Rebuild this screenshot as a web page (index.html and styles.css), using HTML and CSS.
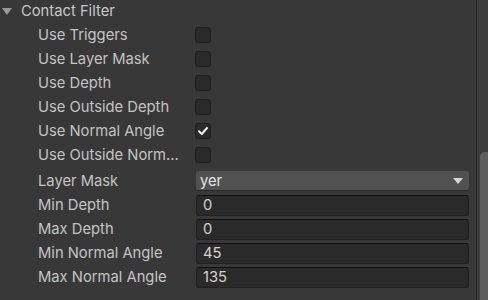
FILE: index.html
```html
<!DOCTYPE html>
<html>
<head>
<meta charset="utf-8">
<link rel="stylesheet" href="styles.css">
</head>
<body>
<div class="window">
  <div class="panel">
    <div class="foldout">
      <span class="arrow"></span>
      <span class="title">Contact Filter</span>
    </div>
    <div class="rows">
      <div class="row"><span class="label">Use Triggers</span><span class="check"></span></div>
      <div class="row"><span class="label">Use Layer Mask</span><span class="check"></span></div>
      <div class="row"><span class="label">Use Depth</span><span class="check"></span></div>
      <div class="row"><span class="label">Use Outside Depth</span><span class="check"></span></div>
      <div class="row"><span class="label">Use Normal Angle</span><span class="check checked"><svg viewBox="0 0 16 16" width="16" height="16"><path d="M4 8.3 L6.8 11 L12 5" fill="none" stroke="#f0f0f0" stroke-width="2" stroke-linecap="round" stroke-linejoin="round"/></svg></span></div>
      <div class="row"><span class="label">Use Outside Norm...</span><span class="check"></span></div>
    </div>
    <div class="rows values">
      <div class="row"><span class="label">Layer Mask</span><span class="dropdown"><span class="val">yer</span><span class="tri"></span></span></div>
      <div class="row"><span class="label">Min Depth</span><span class="field">0</span></div>
      <div class="row"><span class="label">Max Depth</span><span class="field">0</span></div>
      <div class="row"><span class="label">Min Normal Angle</span><span class="field">45</span></div>
      <div class="row"><span class="label">Max Normal Angle</span><span class="field">135</span></div>
    </div>
  </div>
  <div class="scrollbar"><div class="thumb"></div></div>
</div>
</body>
</html>
```
FILE: styles.css
```css
html, body {
  margin: 0;
  padding: 0;
  background: #383838;
}
body {
  font-family: Inter, "Noto Sans", sans-serif;
  font-size: 14.75px;
  color: #c4c4c4;
  width: 488px;
  height: 300px;
  overflow: hidden;
}
.window {
  display: flex;
  height: 300px;
}
.panel {
  flex: 1;
  padding-right: 7px;
  border-right: 1px solid #262626;
}
.foldout {
  display: flex;
  align-items: center;
  height: 22px;
}
.arrow {
  width: 0;
  height: 0;
  margin-left: 2px;
  margin-right: 9px;
  border-left: 5px solid transparent;
  border-right: 5px solid transparent;
  border-top: 7px solid #999999;
}
.title {
  color: #c8c8c8;
}
.rows {
  display: flex;
  flex-direction: column;
  margin-top: 1px;
}
.rows.values {
  margin-top: 2px;
}
.row {
  display: flex;
  align-items: center;
  height: 24px;
}
.label {
  width: 157px;
  padding-left: 38px;
  white-space: nowrap;
}
.check {
  width: 16px;
  height: 16px;
  box-sizing: border-box;
  border: 1px solid #1e1e1e;
  border-radius: 3px;
  background: #2b2b2b;
  display: flex;
  align-items: center;
  justify-content: center;
}
.check svg {
  display: block;
  flex: none;
}
.dropdown {
  flex: 1;
  height: 20px;
  box-sizing: border-box;
  margin-left: 1px;
  background: #515151;
  border-radius: 3px;
  border-bottom: 1px solid #2a2a2a;
  display: flex;
  align-items: center;
  justify-content: space-between;
  padding: 0 6px 0 4px;
  color: #e4e4e4;
}
.tri {
  width: 0;
  height: 0;
  border-left: 5px solid transparent;
  border-right: 5px solid transparent;
  border-top: 6px solid #d8d8d8;
}
.field {
  flex: 1;
  height: 21px;
  box-sizing: border-box;
  margin-left: 1px;
  background: #2a2a2a;
  border: 1px solid #212121;
  border-top-color: #0f0f0f;
  border-radius: 3px;
  display: flex;
  align-items: center;
  padding-left: 6px;
  color: #d2d2d2;
}
.scrollbar {
  width: 11px;
  background: #3c3c3c;
  display: flex;
  justify-content: flex-end;
}
.thumb {
  width: 8px;
  margin-top: 152px;
  height: 148px;
  background: #5e5e5e;
  border-radius: 5px 0 0 0;
}
```
